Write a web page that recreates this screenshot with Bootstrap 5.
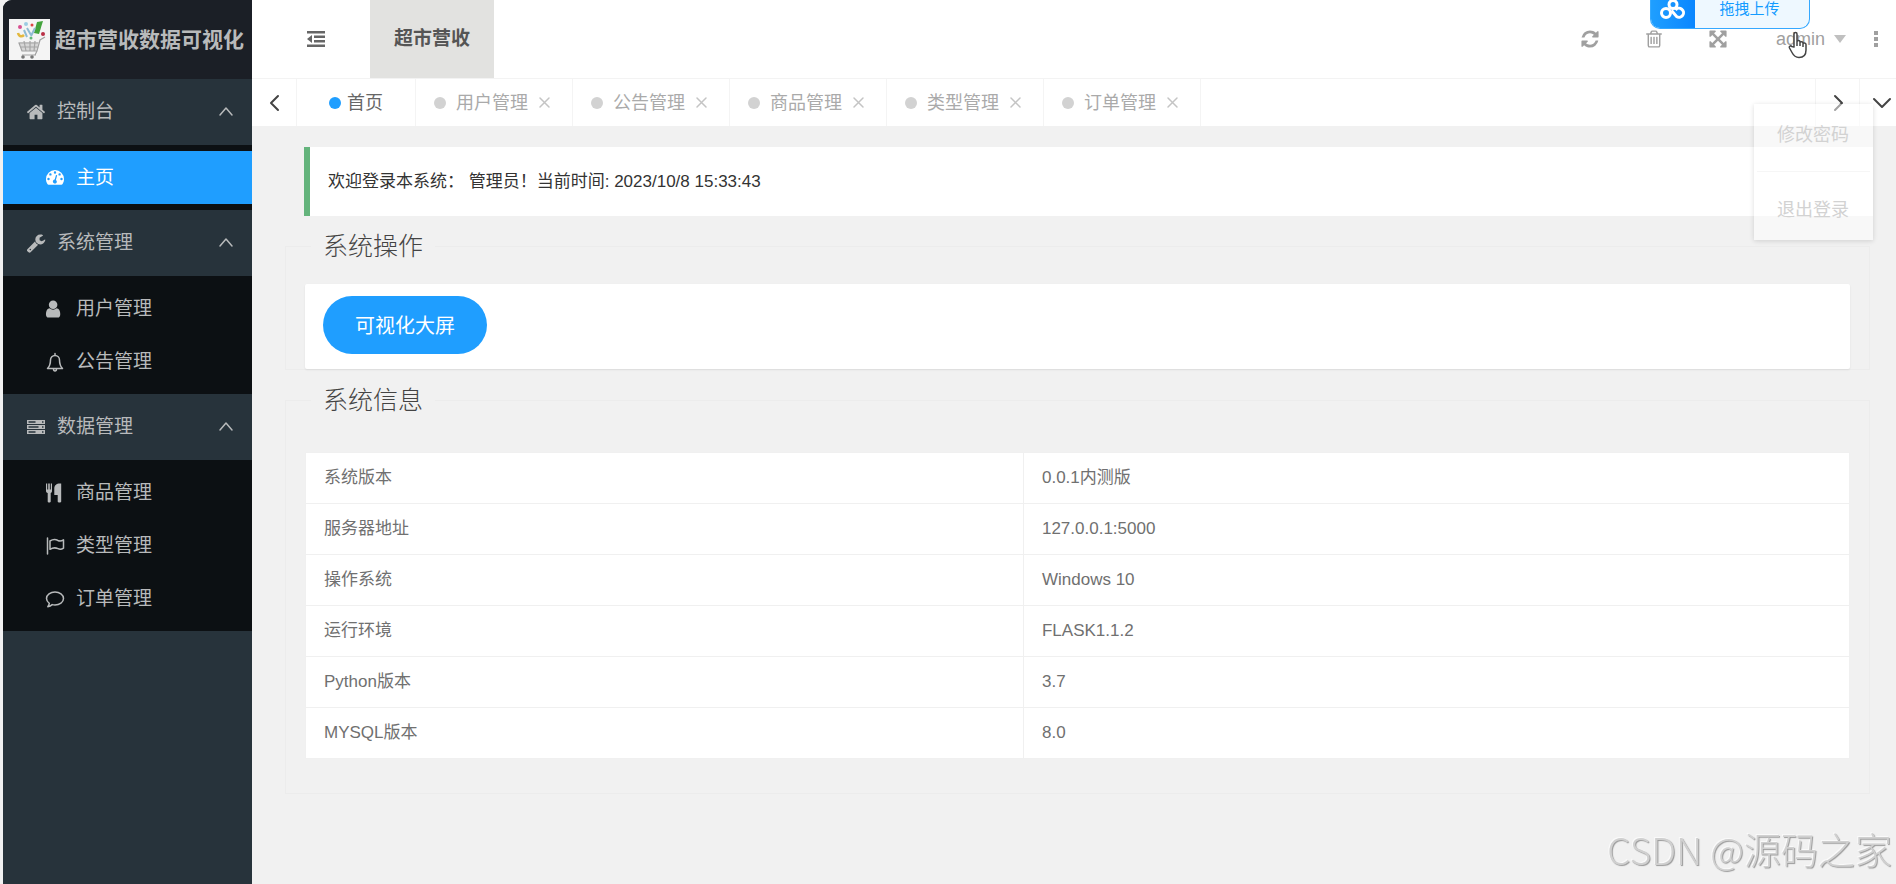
<!DOCTYPE html>
<html lang="zh-CN">
<head>
<meta charset="utf-8">
<meta name="viewport" content="width=device-width, initial-scale=1">
<title>超市营收数据可视化</title>
<link href="https://cdn.jsdelivr.net/npm/bootstrap@5.3.0/dist/css/bootstrap.min.css" rel="stylesheet">
<style>
  body { font-family: "Liberation Sans", "Noto Sans CJK SC", sans-serif; font-size: 17px; line-height: 24px; color: #666; background: #f1f1f1; }
  a { color: inherit; text-decoration: none; }
  svg { display: block; flex: none; }
  .icon { width: 20px; height: 20px; fill: currentColor; }
  .icon-line { fill: none; stroke: currentColor; stroke-width: 1.5; stroke-linejoin: round; stroke-linecap: round; }
  .icon-bold { stroke-width: 2; }

  /* side menu */
  .side { width: 249px; margin-left: 3px; flex: none; background: #27333b; color: #b8babb; border-top-left-radius: 9px; overflow: hidden; font-size: 19px; }
  .brand { height: 79px; background: #1b1f26; font-size: 21px; color: #b8babb; padding-left: 6px; gap: 5px; }
  .side-head { height: 66px; padding: 0 18px 0 23px; gap: 11px; background: none; border: 0; color: inherit; width: 100%; }
  .side-sub { background: #0c1013; padding: 6px 0; margin: 0; list-style: none; }
  .side-sub a { height: 53px; padding-left: 42px; gap: 11px; }
  .side-sub a.active { background: #1f9eff; color: #fff; }

  /* top bar */
  .topbar { height: 79px; background: #fff; border-bottom: 1px solid #f3f3f3; color: #a0a0a0; }
  .flat { background: none; border: 0; padding: 0; color: inherit; }
  .fold { padding: 0 44px 0 54px; color: #666; }
  .module { width: 124px; background: #e2e2e0; color: #555; font-size: 19px; }
  .tools { gap: 44px; padding-right: 14px; }
  .user { gap: 9px; font-size: 18px; }
  .triangle { border: 6px solid transparent; border-top: 8px solid #c0c0c0; border-bottom: 0; }

  /* page tabs */
  .tabbar { height: 47px; background: #fff; }
  .tabbar .step { width: 45px; color: #444; }
  .tabbar .expand { padding: 0 4px 0 12px; color: #444; }
  .page-tab { border-right: 1px solid #f4f4f4; padding: 0 21px 0 18px; gap: 10px; font-size: 18px; color: #aaa; }
  .page-tab svg { color: #c4c4c4; }
  .page-tab.current { padding: 0 32px; gap: 6px; color: #666; }
  .dot { width: 12px; height: 12px; border-radius: 50%; background: #d2d2d2; }
  .current .dot { background: #1f9eff; }
  .line-l { border-left: 1px solid #f4f4f4; }
  .line-r { border-right: 1px solid #f4f4f4; }

  /* page */
  .welcome { margin: 21px 23px 0 52px; padding: 23px 18px 22px; background: #fff; border-left: 6px solid #64b47c; color: #333; }
  .group { margin: 11px 26px 0 33px; border: 1px solid #ececec; padding: 19px 19px 0; }
  .group legend { float: none; width: auto; margin: 0 0 0 6px; padding: 0 12px; font-size: 25px; line-height: 38px; color: #444; font-weight: 300; }
  .group-info { padding: 33px 19px 34px; }
  .ops { background: #fff; border-radius: 2px; padding: 12px 18px 15px; box-shadow: 0 1px 2px rgba(0,0,0,.08); }
  .big-btn { height: 58px; padding: 1px 32px 0; border: 0; background: #1f9eff; color: #fff; font-size: 20px; }
  .info { --bs-table-bg: #fff; --bs-table-color: #707070; border-color: #eee; }
  .info th, .info td { padding: 13px 18px; font-weight: 400; border: 1px solid #f0f0f0; }
  .info th { width: 46.5%; }

  /* floating layers */
  .user-menu { position: absolute; top: 104px; right: 23px; width: 119px; padding: 7px 3px; background: rgba(255,255,255,.5); box-shadow: 0 1px 5px rgba(0,0,0,.14); font-size: 18px; color: #d2d2d2; list-style: none; }
  .user-menu a { display: block; padding: 12px 20px 24px; }
  .user-menu li + li { border-top: 1px solid #f6f6f6; }
  .user-menu li + li a { padding: 26px 20px 11px; }
  .upload { position: absolute; top: 0; right: 86px; width: 160px; height: 29px; border: 1px solid #35a8ff; border-top: 0; border-radius: 0 0 10px 10px; background: #eef8ff; color: #149cff; font-size: 15px; overflow: hidden; padding: 0; }
  .upload-mark { width: 44px; height: 29px; background: linear-gradient(90deg, #1f9fff, #0a86ff); }
  .upload-text { line-height: 16px; margin: 0 5px 11px 0; }
  .pointer { position: absolute; top: 31px; right: 88px; }
  .watermark { position: fixed; right: 4px; bottom: 13px; font: 300 37px/44px "Noto Sans CJK SC", sans-serif; color: #d0d0d0; text-shadow: 1px 1px 1px #999, -1px -1px 0 #fafafa; pointer-events: none; }
</style>
</head>
<body>
<div class="d-flex min-vh-100">
  <aside class="side">
    <a href="#" class="brand d-flex align-items-center fw-bold text-nowrap">
      <svg width="41" height="41" viewBox="0 0 41 41" aria-hidden="true">
        <path fill="#f4f4f4" d="M0 0h41v41H0z"/>
        <path fill="#43a33c" d="M28 3l6-1-4 13-5-1z"/>
        <circle cx="11" cy="8" r="2" fill="#d85091"/><circle cx="17" cy="5" r="2" fill="#9ccbe2"/>
        <path d="M9 14c1 4 4 4 6 2" fill="none" stroke="#e3b83e" stroke-width="2.500"/><circle cx="34" cy="15" r="2" fill="#b92f45"/>
        <circle cx="23" cy="6" r="1.500" fill="#d44"/><circle cx="22" cy="19" r="1.500" fill="#5fb878"/>
        <path d="M18 9l4 7m-7-5 3 7m8-9-4 8" stroke="#8fbbd3" stroke-width="2"/>
        <path d="M36 18l-5 3-3 11H13l-3-8h19M12 28h17M15 22l2 10m4-10v10m5-10-1 10M13 36h14M28 32l-2 4" fill="none" stroke="#a2a2a2" stroke-width="1.200"/>
        <path d="M10 23h20l-3 9H13z" fill="#aaa" opacity=".4"/>
        <circle cx="14" cy="38" r="1.800" fill="#777"/><circle cx="23" cy="38" r="1.800" fill="#777"/>
      </svg>
      <span>超市营收数据可视化</span>
    </a>
    <button type="button" class="side-head d-flex align-items-center">
      <svg class="icon" viewBox="0 0 1792 1792"><path d="M1472 992v480q0 26-19 45t-45 19h-384v-384h-256v384h-384q-26 0-45-19t-19-45v-480q0-1 .5-3t.5-3l575-474 575 474q1 2 1 6zm223-69l-62 74q-8 9-21 11h-3q-13 0-21-7l-692-577-692 577q-12 8-24 7-13-2-21-11l-62-74q-8-10-7-23.5t11-21.5l719-599q32-26 76-26t76 26l244 204v-195q0-14 9-23t23-9h192q14 0 23 9t9 23v408l219 182q10 8 11 21.5t-7 23.5z"/></svg>
      <span>控制台</span>
      <svg class="icon-line ms-auto" width="16" height="16" viewBox="0 0 16 16"><path d="M2 11l6-7 6 7"/></svg>
    </button>
    <ul class="side-sub">
      <li><a href="#" class="active d-flex align-items-center">
        <svg class="icon" viewBox="0 0 20 20"><path fill-rule="evenodd" d="M10 2a9 9 0 0 0-9 9c0 2 .5 3.500 1.400 5 .3.500.7.700 1.200.700h12.800c.5 0 .9-.2 1.200-.7.900-1.500 1.400-3 1.400-5a9 9 0 0 0-9-9zM3.500 9.800a1.200 1.200 0 1 0 0 2.400 1.200 1.200 0 0 0 0-2.400zM5.400 5.200a1.200 1.200 0 1 0 0 2.400 1.200 1.200 0 0 0 0-2.400zM10 3.300a1.200 1.200 0 1 0 0 2.400 1.200 1.200 0 0 0 0-2.400zM14.600 5.200a1.200 1.200 0 1 0 0 2.400 1.200 1.200 0 0 0 0-2.400zM16.500 9.800a1.200 1.200 0 1 0 0 2.400 1.200 1.200 0 0 0 0-2.400zM11 7l-1.300 4.600a2 2 0 1 0 1.200.300L12.200 7.300z"/></svg>
        <span>主页</span></a></li>
    </ul>
    <button type="button" class="side-head d-flex align-items-center">
      <svg class="icon" viewBox="0 0 1792 1792"><path d="M448 1472q0-26-19-45t-45-19-45 19-19 45 19 45 45 19 45-19 19-45zm644-420l-682 682q-37 37-90 37-52 0-91-37l-106-108q-38-36-38-90 0-53 38-91l681-681q39 98 114.5 173.5t173.5 114.5zm634-435q0 39-23 106-47 134-164.5 217.5t-258.5 83.500q-185 0-316.500-131.500t-131.500-316.500 131.500-316.500 316.500-131.500q58 0 121.500 16.500t107.500 46.500q16 11 16 28t-16 28l-293 169v224l193 107q5-3 79-48.500t135.500-81 70.500-35.500q15 0 23.500 10t8.500 25z"/></svg>
      <span>系统管理</span>
      <svg class="icon-line ms-auto" width="16" height="16" viewBox="0 0 16 16"><path d="M2 11l6-7 6 7"/></svg>
    </button>
    <ul class="side-sub">
      <li><a href="#" class="d-flex align-items-center">
        <svg class="icon" viewBox="170 0 1792 1792"><path d="M1536 1399q0 109-62.500 187t-150.500 78h-854q-88 0-150.500-78t-62.500-187q0-85 8.500-160.500t31.500-152 58.500-131 94-89 134.500-34.500q131 128 313 128t313-128q76 0 134.500 34.500t94 89 58.500 131 31.500 152 8.500 160.500zm-256-887q0 159-112.500 271.500t-271.500 112.500-271.500-112.500-112.500-271.500 112.500-271.500 271.500-112.500 271.500 112.500 112.500 271.500z"/></svg>
        <span>用户管理</span></a></li>
      <li><a href="#" class="d-flex align-items-center">
        <svg class="icon icon-line" viewBox="0 0 20 20"><path d="M2.500 16.500C5 14 5.500 11 5.500 8a4.500 4.500 0 0 1 9 0c0 3 .5 6 3 8.500zM10 1.500v2M8.500 17c0 2.500 3 2.500 3 0"/></svg>
        <span>公告管理</span></a></li>
    </ul>
    <button type="button" class="side-head d-flex align-items-center">
      <svg class="icon" viewBox="0 0 20 20"><path fill-rule="evenodd" d="M1 3h18v4H1zM1 8h18v4H1zM1 13h18v4H1zM2.500 4.300v1.400h7V4.300zM2.500 9.300v1.400h10V9.300zM2.500 14.300v1.400h7v-1.400zM16 4.300v1.400h1.500V4.300zM16 9.300v1.400h1.500V9.300zM16 14.300v1.400h1.500v-1.400z"/></svg>
      <span>数据管理</span>
      <svg class="icon-line ms-auto" width="16" height="16" viewBox="0 0 16 16"><path d="M2 11l6-7 6 7"/></svg>
    </button>
    <ul class="side-sub">
      <li><a href="#" class="d-flex align-items-center">
        <svg class="icon" viewBox="0 0 20 20"><path d="M1 .5h1.200v6h1V.5h1.600v6h1V.5H7v7.500c0 1-.5 1.600-1.300 2v8.500c0 1.300-3 1.300-3 0V10C1.600 9.600 1 9 1 8zM15 .5h1.200v18c0 1.300-3.500 1.300-3.500 0V12H9.300V5.500c0-3 2-5 5.700-5z"/></svg>
        <span>商品管理</span></a></li>
      <li><a href="#" class="d-flex align-items-center">
        <svg class="icon icon-line" viewBox="0 0 20 20"><path d="M2.500 2v16M5 5c4-2.500 6-1.500 8-.5 1.500.7 3.500.5 5.500-.7v8.400c-2 1.300-4 1.300-5.500.500-2-1-4.500-1.500-8 .6z"/></svg>
        <span>类型管理</span></a></li>
      <li><a href="#" class="d-flex align-items-center">
        <svg class="icon icon-line" viewBox="0 0 20 20"><path d="M10 3c4.600 0 8.500 2.800 8.500 6.500S14.600 16 10 16c-1 0-2-.1-2.800-.400-1.200 1.200-2.700 1.900-4.400 2.100.8-1 1.300-2 1.500-3.400C2.500 13 1.500 11.400 1.500 9.500 1.500 5.800 5.400 3 10 3z"/></svg>
        <span>订单管理</span></a></li>
    </ul>
  </aside>

  <div class="flex-grow-1 d-flex flex-column">
    <header class="topbar d-flex">
      <button type="button" class="flat fold" aria-label="收起菜单">
        <svg width="20" height="18" viewBox="0 0 20 18" fill="currentColor"><path d="M1 1h18v2.500H1zM8 5.500h11V8H8zM8 10h11v2.500H8zM1 14.500h18V17H1zM6 5v8L1 9z"/></svg>
      </button>
      <a href="#" class="module d-flex align-items-center justify-content-center fw-bold">超市营收</a>
      <div class="tools d-flex align-items-center ms-auto">
        <button type="button" class="flat" aria-label="刷新"><svg class="icon" viewBox="0 0 1792 1792"><path d="M1639 1056q0 5-1 7-64 268-268 434.500t-478 166.500q-146 0-282.500-55t-243.500-157l-129 129q-19 19-45 19t-45-19-19-45v-448q0-26 19-45t45-19h448q26 0 45 19t19 45-19 45l-137 137q71 66 161 102t187 36q134 0 250-65t186-179q11-17 53-117 8-23 30-23h192q13 0 22.500 9.500t9.500 22.500zm25-800v448q0 26-19 45t-45 19h-448q-26 0-45-19t-19-45 19-45l138-138q-148-137-349-137-134 0-250 65t-186 179q-11 17-53 117-8 23-30 23h-199q-13 0-22.500-9.500t-9.500-22.500v-7q65-268 270-434.500t480-166.500q146 0 284 55.500t245 156.500l130-129q19-19 45-19t45 19 19 45z"/></svg></button>
        <button type="button" class="flat" aria-label="清理"><svg class="icon" viewBox="0 0 1792 1792"><path d="M704 736v576q0 14-9 23t-23 9h-64q-14 0-23-9t-9-23v-576q0-14 9-23t23-9h64q14 0 23 9t9 23zm256 0v576q0 14-9 23t-23 9h-64q-14 0-23-9t-9-23v-576q0-14 9-23t23-9h64q14 0 23 9t9 23zm256 0v576q0 14-9 23t-23 9h-64q-14 0-23-9t-9-23v-576q0-14 9-23t23-9h64q14 0 23 9t9 23zm128 724v-948h-896v948q0 22 7 40.500t14.500 27 10.500 8.500h832q3 0 10.500-8.500t14.500-27 7-40.500zm-672-1076h448l-48-117q-7-9-17-11h-317q-10 2-17 11zm928 32v64q0 14-9 23t-23 9h-96v948q0 83-47 143.500t-113 60.500h-832q-66 0-113-58.500t-47-141.500v-952h-96q-14 0-23-9t-9-23v-64q0-14 9-23t23-9h309l70-167q15-37 54-63t79-26h320q40 0 79 26t54 63l70 167h309q14 0 23 9t9 23z"/></svg></button>
        <button type="button" class="flat" aria-label="全屏"><svg class="icon" viewBox="0 0 1792 1792"><path d="M1411 541l-355 355 355 355 144-144q29-31 70-14 39 17 39 59v448q0 26-19 45t-45 19h-448q-42 0-59-40-17-39 14-69l144-144-355-355-355 355 144 144q31 30 14 69-17 40-59 40h-448q-26 0-45-19t-19-45v-448q0-42 40-59 39-17 69 14l144 144 355-355-355-355-144 144q-19 19-45 19-12 0-24-5-40-17-40-59v-448q0-26 19-45t45-19h448q42 0 59 40 17 39-14 69l-144 144 355 355 355-355-144-144q-31-30-14-69 17-40 59-40h448q26 0 45 19t19 45v448q0 42-39 59-13 5-25 5-26 0-45-19z"/></svg></button>
        <div class="d-flex align-items-center gap-4 ms-1">
          <button type="button" class="flat user d-flex align-items-center"><span>admin</span><span class="triangle"></span></button>
          <button type="button" class="flat" aria-label="更多"><svg width="12" height="18" viewBox="0 0 12 18" fill="currentColor"><path d="M4 1h4v4H4zM4 7h4v4H4zM4 13h4v4H4z"/></svg></button>
        </div>
      </div>
    </header>

    <nav class="tabbar d-flex" aria-label="页面标签">
      <button type="button" class="flat step line-r d-flex align-items-center justify-content-center" aria-label="向左"><svg class="icon-line icon-bold" width="18" height="18" viewBox="0 0 18 18"><path d="M13 2L6 9l7 7"/></svg></button>
      <a href="#" class="page-tab current d-flex align-items-center"><span class="dot"></span>首页</a>
      <a href="#" class="page-tab d-flex align-items-center"><span class="dot"></span>用户管理<svg class="icon-line" width="13" height="13" viewBox="0 0 13 13"><path d="M2 2l9 9M11 2l-9 9"/></svg></a>
      <a href="#" class="page-tab d-flex align-items-center"><span class="dot"></span>公告管理<svg class="icon-line" width="13" height="13" viewBox="0 0 13 13"><path d="M2 2l9 9M11 2l-9 9"/></svg></a>
      <a href="#" class="page-tab d-flex align-items-center"><span class="dot"></span>商品管理<svg class="icon-line" width="13" height="13" viewBox="0 0 13 13"><path d="M2 2l9 9M11 2l-9 9"/></svg></a>
      <a href="#" class="page-tab d-flex align-items-center"><span class="dot"></span>类型管理<svg class="icon-line" width="13" height="13" viewBox="0 0 13 13"><path d="M2 2l9 9M11 2l-9 9"/></svg></a>
      <a href="#" class="page-tab d-flex align-items-center"><span class="dot"></span>订单管理<svg class="icon-line" width="13" height="13" viewBox="0 0 13 13"><path d="M2 2l9 9M11 2l-9 9"/></svg></a>
      <button type="button" class="flat step line-l line-r ms-auto d-flex align-items-center justify-content-center" aria-label="向右"><svg class="icon-line icon-bold" width="18" height="18" viewBox="0 0 18 18"><path d="M6 2l7 7-7 7"/></svg></button>
      <button type="button" class="flat expand d-flex align-items-center" aria-label="展开"><svg class="icon-line icon-bold" width="20" height="18" viewBox="0 0 20 18"><path d="M2 5l8 8 8-8"/></svg></button>
    </nav>

    <main>
      <div class="welcome">欢迎登录本系统： 管理员！当前时间: 2023/10/8 15:33:43</div>
      <fieldset class="group">
        <legend>系统操作</legend>
        <div class="ops"><button type="button" class="big-btn rounded-pill">可视化大屏</button></div>
      </fieldset>
      <fieldset class="group group-info">
        <legend>系统信息</legend>
        <table class="table info mb-0">
          <tbody>
            <tr><th scope="row">系统版本</th><td>0.0.1内测版</td></tr>
            <tr><th scope="row">服务器地址</th><td>127.0.0.1:5000</td></tr>
            <tr><th scope="row">操作系统</th><td>Windows 10</td></tr>
            <tr><th scope="row">运行环境</th><td>FLASK1.1.2</td></tr>
            <tr><th scope="row">Python版本</th><td>3.7</td></tr>
            <tr><th scope="row">MYSQL版本</th><td>8.0</td></tr>
          </tbody>
        </table>
      </fieldset>
    </main>
  </div>
</div>

<ul class="user-menu m-0">
  <li><a href="#">修改密码</a></li>
  <li><a href="#">退出登录</a></li>
</ul>
<button type="button" class="upload d-flex align-items-center">
  <span class="upload-mark d-flex justify-content-center">
    <svg width="30" height="22" viewBox="0 0 30 22" fill="none" stroke="#fff" stroke-width="3"><circle cx="15" cy="4.500" r="4"/><circle cx="8" cy="13" r="4.500"/><path d="M17.500 10a4.500 4.500 0 1 1 1 6.500l-5-6"/></svg>
  </span>
  <span class="upload-text flex-grow-1">拖拽上传</span>
</button>
<svg class="pointer" width="20" height="28" viewBox="0 0 20 28" fill="#fff" stroke="#444" stroke-width="1.500" stroke-linejoin="round" aria-hidden="true"><path d="M6 16V3c0-2 3-2 3 0v8c0-2 3-2 3 0v1c0-2 3-1.500 3 0v1c0-1.500 3-1.500 3 .5V19c0 5-3 7.500-7 7.500-3.500 0-5.500-2-7-5L1.500 17c-.8-1.800 1.200-2.800 2.300-1.500zM9 11v4M12 12v3M15 13v3"/></svg>
<div class="watermark">CSDN @源码之家</div>
<script src="https://cdn.jsdelivr.net/npm/bootstrap@5.3.0/dist/js/bootstrap.bundle.min.js"></script>
</body>
</html>
